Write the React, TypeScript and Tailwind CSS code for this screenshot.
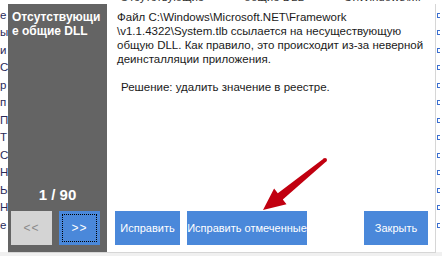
const leftChars = ['е', 'ы', 'и', 'С', 'р', 'п', 'П', 'Т', 'С', 'Н', 'Ы', 'Н', 'е']

function BackgroundTable() {
  return (
    <div className="flex h-full flex-col text-[11.5px] leading-[17.5px] text-[#1a1a1a]">
      <div className="-mt-[11px] flex h-[17.5px] gap-[40px] whitespace-nowrap pl-[120px] text-[#333]">
        <span>Отсутствующие</span>
        <span>общие DLL</span>
        <span>C:\Windows\Mi</span>
      </div>
      {leftChars.map((c, i) => (
        <div key={i} className="flex h-[17.5px] items-center justify-between">
          <span className="w-[8px] overflow-hidden text-[#2a2a5a]">{c}</span>
          <span className="mr-[2px] h-[5px] w-[3px] border-y border-l border-[#3b6fd0]" />
        </div>
      ))}
      <div className="mt-auto h-[4px] bg-[#f0f0f0]" />
    </div>
  )
}

function Arrow() {
  return (
    <svg className="pointer-events-none absolute left-0 top-0" width="442" height="256">
      <polygon
        points="323.8,158.4 277.8,193.3 274.1,188.6 263,210 286.5,204.3 282.8,199.5 326.2,161.6"
        fill="#c10010"
      />
      <circle cx="325" cy="160" r="2" fill="#c10010" />
    </svg>
  )
}

export default function App() {
  return (
    <div className="relative h-[256px] w-[442px] overflow-hidden bg-white font-['Liberation_Sans',sans-serif]">
      <BackgroundTable />

      <div className="absolute left-[8px] top-[4px] flex h-[249px] w-[428px] border-b border-r border-[#d6d6d6] bg-white">
        {/* left panel */}
        <div className="flex w-[99px] flex-col bg-[#646464]">
          <div className="pl-[4px] pt-[6px] text-[12px] font-bold leading-[14px] text-white">
            <div>Отсутствующи</div>
            <div>е общие DLL</div>
          </div>
          <div className="mt-auto text-center text-[15px] font-bold leading-[18px] text-white">1 / 90</div>
          <div className="mb-[7px] mt-[7px] flex gap-[7px] pl-[3px]">
            <button className="flex h-[34px] w-[41px] items-center justify-center bg-[#d4d4d4] text-[12px] tracking-[1px] text-[#8a8a8a]">
              &lt;&lt;
            </button>
            <button className="flex h-[34px] w-[41px] bg-[#4a88da] p-[3px]">
              <span className="flex flex-1 items-center justify-center border border-dotted border-black text-[12px] tracking-[1px] text-white">
                &gt;&gt;
              </span>
            </button>
          </div>
        </div>

        {/* right content */}
        <div className="flex flex-1 flex-col">
          <div className="pl-[10px] pt-[6px] text-[11.5px] leading-[14px] text-[#1a1a1a]">
            <div>Файл C:\Windows\Microsoft.NET\Framework</div>
            <div>\v1.1.4322\System.tlb ссылается на несуществующую</div>
            <div>общую DLL. Как правило, это происходит из-за неверной</div>
            <div>деинсталляции приложения.</div>
            <div className="mt-[14px] pl-[4px]">Решение: удалить значение в реестре.</div>
          </div>

          <div className="mb-[7px] mt-auto flex gap-[7px] pl-[8px] pr-[7px] text-[11px] text-white">
            <button className="h-[34px] w-[65px] bg-[#4a88da]">Исправить</button>
            <button className="h-[34px] w-[120px] whitespace-nowrap bg-[#4a88da]">Исправить отмеченные</button>
            <button className="ml-auto h-[34px] w-[64px] bg-[#4a88da]">Закрыть</button>
          </div>
        </div>
      </div>

      <Arrow />
    </div>
  )
}
